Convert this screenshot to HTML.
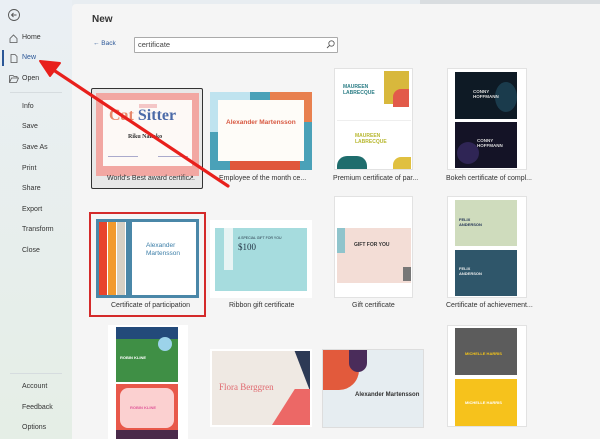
<!DOCTYPE html>
<html><head><style>
*{margin:0;padding:0;box-sizing:border-box}
body{width:600px;height:439px;overflow:hidden;position:relative;background:#e8edf1;font-family:"Liberation Sans",sans-serif;font-size:7px;color:#333}
.a{position:absolute}
#side{left:0;top:0;width:72px;height:439px;background:linear-gradient(#eaeff4,#e5eee6)}
#main{left:72px;top:4px;width:528px;height:435px;background:#f5f5f5;border-top-left-radius:4px}
.si{position:absolute;left:22px;font-size:7px;color:#333}
.lab{position:absolute;font-size:7px;color:#333;white-space:nowrap}
.t{position:absolute;overflow:hidden}
</style></head><body>
<div class="a" id="side"></div>
<div class="a" style="left:420px;top:0;width:180px;height:4px;background:#d9dde0"></div>
<div class="a" id="main"></div>
<!-- sidebar -->
<svg class="a" style="left:7px;top:8px" width="14" height="14"><circle cx="7" cy="7" r="5.5" fill="none" stroke="#555" stroke-width="0.9"/><path d="M9.5 7H4.5M6.5 5L4.5 7 6.5 9" fill="none" stroke="#555" stroke-width="0.9"/></svg>
<svg class="a" style="left:9px;top:34px" width="9" height="9"><path d="M1 4.5L4.5 1 8 4.5V8.5H1Z" fill="none" stroke="#555" stroke-width="0.8"/></svg>
<div class="si" style="top:34px">Home</div>
<div class="a" style="left:2px;top:50px;width:1.5px;height:16px;background:#2b5797"></div>
<svg class="a" style="left:10px;top:54px" width="8" height="9"><path d="M1 .5H5L7 2.5V8.5H1Z" fill="none" stroke="#555" stroke-width="0.8"/></svg>
<div class="si" style="top:54px;color:#2b5797">New</div>
<svg class="a" style="left:9px;top:75px" width="10" height="8"><path d="M.5 .5H4L5 1.5H8V3M.5 .5V7.5H7.5L9.5 3H2.5L.5 7.5" fill="none" stroke="#555" stroke-width="0.8"/></svg>
<div class="si" style="top:75px">Open</div>
<div class="a" style="left:10px;top:92px;width:52px;height:1px;background:#d6dcdf"></div>
<div class="si" style="top:103px">Info</div>
<div class="si" style="top:123px">Save</div>
<div class="si" style="top:144px">Save As</div>
<div class="si" style="top:165px">Print</div>
<div class="si" style="top:185px">Share</div>
<div class="si" style="top:206px">Export</div>
<div class="si" style="top:226px">Transform</div>
<div class="si" style="top:247px">Close</div>
<div class="a" style="left:10px;top:373px;width:52px;height:1px;background:#d6dcdf"></div>
<div class="si" style="top:383px">Account</div>
<div class="si" style="top:404px">Feedback</div>
<div class="si" style="top:424px">Options</div>
<!-- header -->
<div class="a" style="left:92px;top:14px;font-size:10px;font-weight:bold;color:#333">New</div>
<div class="a" style="left:93px;top:40px;font-size:6.5px;color:#2b5797">&#8592; Back</div>
<div class="a" style="left:134px;top:37px;width:204px;height:16px;background:#fff;border:1px solid #aaa;border-radius:1px"></div>
<div class="a" style="left:138px;top:40px;font-size:7.5px;color:#444">certificate</div>
<svg class="a" style="left:326px;top:40px" width="9" height="9"><circle cx="5.5" cy="3.5" r="2.7" fill="none" stroke="#555" stroke-width="0.8"/><path d="M3.5 5.5L1 8" stroke="#555" stroke-width="0.9"/></svg>

<!-- row1 -->
<div class="a" style="left:91px;top:88px;width:112px;height:101px;border:1px solid #333;background:#e8e8e8;border-radius:2px"></div>
<div class="t" style="left:96px;top:93px;width:103px;height:83px;background:#f2a7a2">
 <div class="a" style="left:7px;top:7px;width:89px;height:66px;background:#fdf9f6">
  <div class="a" style="left:36px;top:4px;width:18px;height:4px;background:#f4c6c6"></div>
  <div class="a" style="left:6px;top:7px;font-size:16px;font-weight:bold;font-family:'Liberation Serif',serif;color:#e8896b;white-space:nowrap">Cat <span style="color:#4b6aa8">Sitter</span></div>
  <div class="a" style="left:25px;top:34px;font-size:6px;font-weight:bold;font-family:'Liberation Serif',serif;color:#333">Riku Nanako</div>
  <div class="a" style="left:5px;top:56px;width:30px;height:1px;background:#aac"></div>
  <div class="a" style="left:55px;top:56px;width:30px;height:1px;background:#aac"></div>
 </div>
</div>
<div class="lab" style="left:107px;top:175px">World's Best award certific...</div>
<div class="lab" style="left:188px;top:174px">&#x2197;</div>
<div class="t" style="left:210px;top:92px;width:102px;height:78px;background:#4aa1b8">
 <div class="a" style="left:60px;top:0;width:42px;height:30px;background:#e8804f"></div>
 <div class="a" style="left:0;top:0;width:40px;height:40px;background:#bfe3ef"></div>
 <div class="a" style="left:20px;top:68px;width:70px;height:10px;background:#e0573c"></div>
 <div class="a" style="left:8px;top:8px;width:86px;height:61px;background:#fefcf8"></div>
 <div class="a" style="left:16px;top:27px;font-size:6.5px;font-weight:bold;color:#d85a43">Alexander Martensson</div>
</div>
<div class="lab" style="left:219px;top:175px">Employee of the month ce...</div>
<div class="t" style="left:334px;top:68px;width:79px;height:102px;background:#fff;border:1px solid #e2e2e2">
 <div class="a" style="left:49px;top:2px;width:25px;height:33px;background:#d8b83c"></div>
 <div class="a" style="left:58px;top:20px;width:16px;height:18px;background:#e25a4a;border-radius:8px 0 0 0"></div>
 <div class="a" style="left:8px;top:15px;font-size:5px;font-weight:bold;color:#2c7e86">MAUREEN<br>LABRECQUE</div>
 <div class="a" style="left:2px;top:51px;width:74px;height:1px;background:#eee"></div>
 <div class="a" style="left:20px;top:64px;font-size:5px;font-weight:bold;color:#b8b830">MAUREEN<br>LABRECQUE</div>
 <div class="a" style="left:2px;top:87px;width:30px;height:14px;background:#1f6d6d;border-radius:10px 10px 0 0"></div>
 <div class="a" style="left:58px;top:88px;width:18px;height:13px;background:#e0c040;border-radius:8px 0 0 0"></div>
</div>
<div class="lab" style="left:333px;top:175px">Premium certificate of par...</div>
<div class="t" style="left:447px;top:68px;width:80px;height:102px;background:#fff;border:1px solid #e2e2e2">
 <div class="a" style="left:7px;top:3px;width:62px;height:47px;background:#0e1a25"><div class="a" style="left:40px;top:10px;width:22px;height:30px;background:#1f4a5c;border-radius:50%;opacity:.7"></div><div class="a" style="left:18px;top:17px;font-size:4.5px;font-weight:bold;color:#ddd">CONNY<br>HOFFMANN</div></div>
 <div class="a" style="left:7px;top:53px;width:62px;height:46px;background:#141326"><div class="a" style="left:2px;top:20px;width:22px;height:22px;background:#3b2e6a;border-radius:50%;opacity:.7"></div><div class="a" style="left:22px;top:16px;font-size:4.5px;font-weight:bold;color:#ddd">CONNY<br>HOFFMANN</div></div>
</div>
<div class="lab" style="left:446px;top:175px">Bokeh certificate of compl...</div>

<!-- row2 -->
<div class="a" style="left:89px;top:212px;width:117px;height:105px;border:2px solid #d42a2a"></div>
<div class="t" style="left:96px;top:219px;width:103px;height:79px;background:#4a87a8">
 <div class="a" style="left:3px;top:3px;width:97px;height:73px;background:#fff"></div>
 <div class="a" style="left:3px;top:3px;width:8px;height:73px;background:#e8452c"></div>
 <div class="a" style="left:12px;top:3px;width:8px;height:73px;background:#f29a2e"></div>
 <div class="a" style="left:21px;top:3px;width:8px;height:73px;background:#d7d1c5"></div>
 <div class="a" style="left:30px;top:3px;width:6px;height:73px;background:#4a87a8"></div>
 <div class="a" style="left:50px;top:23px;font-size:6.5px;color:#3d7fa8;line-height:8px">Alexander<br>Martensson</div>
</div>
<div class="lab" style="left:111px;top:302px">Certificate of participation</div>
<div class="t" style="left:210px;top:220px;width:102px;height:78px;background:#fff">
 <div class="a" style="left:5px;top:8px;width:92px;height:63px;background:#a6dcde"></div>
 <div class="a" style="left:14px;top:8px;width:9px;height:42px;background:#e8f4f4"></div>
 <div class="a" style="left:28px;top:22px;font-size:9px;font-family:'Liberation Serif',serif;color:#234">$100</div>
 <div class="a" style="left:28px;top:16px;font-size:3.5px;color:#234">A SPECIAL GIFT FOR YOU</div>
</div>
<div class="lab" style="left:229px;top:302px">Ribbon gift certificate</div>
<div class="t" style="left:334px;top:196px;width:79px;height:102px;background:#fff;border:1px solid #e2e2e2">
 <div class="a" style="left:2px;top:31px;width:74px;height:55px;background:#f3ddd6"></div>
 <div class="a" style="left:2px;top:31px;width:8px;height:25px;background:#8fc4cc"></div>
 <div class="a" style="left:68px;top:70px;width:8px;height:14px;background:#777"></div>
 <div class="a" style="left:19px;top:45px;font-size:5px;font-weight:bold;color:#333">GIFT FOR YOU</div>
</div>
<div class="lab" style="left:352px;top:302px">Gift certificate</div>
<div class="t" style="left:447px;top:196px;width:80px;height:102px;background:#fff;border:1px solid #e2e2e2">
 <div class="a" style="left:7px;top:3px;width:62px;height:46px;background:#cfdcbd"><div class="a" style="left:4px;top:17px;font-size:4px;font-weight:bold;color:#235">FELIX<br>ANDERSON</div></div>
 <div class="a" style="left:7px;top:53px;width:62px;height:46px;background:#2f566a"><div class="a" style="left:4px;top:16px;font-size:4px;font-weight:bold;color:#eee">FELIX<br>ANDERSON</div></div>
</div>
<div class="lab" style="left:446px;top:302px">Certificate of achievement...</div>

<!-- row3 -->
<div class="t" style="left:108px;top:325px;width:80px;height:114px;background:#fff">
 <div class="a" style="left:8px;top:2px;width:62px;height:55px;background:#3f8f45"><div class="a" style="left:0;top:0;width:62px;height:12px;background:#234a7a"></div><div class="a" style="left:42px;top:10px;width:14px;height:14px;background:#9cd3ea;border-radius:50%"></div><div class="a" style="left:4px;top:28px;font-size:4px;font-weight:bold;color:#fff">ROBIN KLINE</div></div>
 <div class="a" style="left:8px;top:59px;width:62px;height:55px;background:#e8584a"><div class="a" style="left:4px;top:4px;width:54px;height:40px;background:#fbd0d0;border-radius:8px"></div><div class="a" style="left:0;top:46px;width:62px;height:9px;background:#4a2a4a"></div><div class="a" style="left:14px;top:21px;font-size:4px;font-weight:bold;color:#e05a9a">ROBIN KLINE</div></div>
</div>
<div class="t" style="left:210px;top:349px;width:102px;height:78px;background:#fff">
 <div class="a" style="left:2px;top:2px;width:98px;height:74px;background:#efe9e3"></div>
 <div class="a" style="left:78px;top:2px;width:22px;height:40px;background:#2d3a55;clip-path:polygon(30% 0,100% 0,100% 100%)"></div>
 <div class="a" style="left:62px;top:40px;width:38px;height:36px;background:#ec6866;clip-path:polygon(60% 0,100% 0,100% 100%,0 100%)"></div>
 <div class="a" style="left:9px;top:33px;font-size:9px;font-family:'Liberation Serif',serif;color:#e06a70">Flora Berggren</div>
</div>
<div class="t" style="left:322px;top:349px;width:102px;height:79px;background:#e6edf1;border:1px solid #ddd">
 <div class="a" style="left:0;top:0;width:36px;height:40px;background:#e25a3c;border-radius:0 0 20px 0"></div>
 <div class="a" style="left:26px;top:0;width:18px;height:22px;background:#4a2c5a;border-radius:0 0 10px 10px"></div>
 <div class="a" style="left:32px;top:42px;font-size:6px;font-weight:bold;color:#333">Alexander Martensson</div>
</div>
<div class="t" style="left:447px;top:325px;width:80px;height:102px;background:#fff;border:1px solid #e2e2e2">
 <div class="a" style="left:7px;top:2px;width:62px;height:47px;background:#5c5c5c"><div class="a" style="left:10px;top:23px;font-size:4px;font-weight:bold;color:#f5c518">MICHELLE HARRIS</div></div>
 <div class="a" style="left:7px;top:53px;width:62px;height:47px;background:#f6c21c"><div class="a" style="left:10px;top:21px;font-size:4px;font-weight:bold;color:#fff">MICHELLE HARRIS</div></div>
</div>

<!-- red arrow -->
<svg class="a" style="left:0;top:0" width="600" height="439"><path d="M228 186L52 69" stroke="#e8201c" stroke-width="3.2" stroke-linecap="round"/><path d="M40 61L60 63 50 76Z" fill="#e8201c" stroke="#e8201c" stroke-width="2" stroke-linejoin="round"/></svg>
</body></html>
